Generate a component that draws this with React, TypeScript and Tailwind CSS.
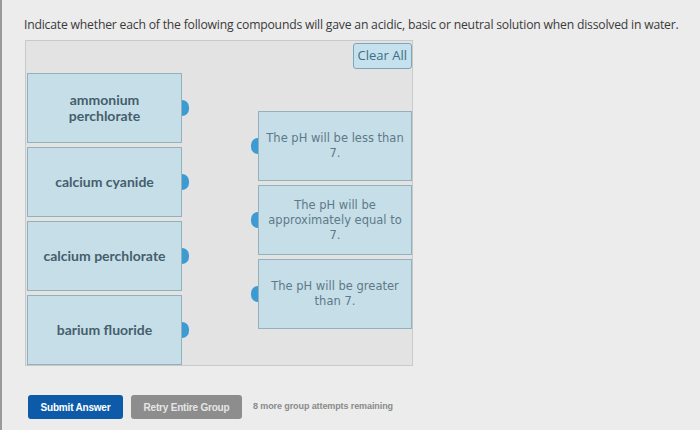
import React from "react";

const compounds = [
  ["ammonium", "perchlorate"],
  ["calcium cyanide"],
  ["calcium perchlorate"],
  ["barium fluoride"],
];

const answers = [
  "The pH will be less than 7.",
  "The pH will be approximately equal to 7.",
  "The pH will be greater than 7.",
];

export default function App() {
  return (
    <div className="w-[700px] h-[430px] overflow-hidden bg-[#ececec] border-l-2 border-[#9a9a9a] font-['Open_Sans',sans-serif]">
      <p className="pt-[15px] pl-[22px] text-[12.2px] tracking-[-0.2px] text-[#3a3a3a] leading-5">
        Indicate whether each of the following compounds will gave an acidic, basic or neutral solution when dissolved in water.
      </p>

      <div className="ml-[23px] mt-[5px] w-[388px] h-[326px] border border-[#c9c9c9] bg-[#e3e3e3] flex flex-col">
        <div className="flex justify-end pt-[2px] h-[32px]">
          <button className="h-[26px] px-[4px] rounded-[3px] border border-[#7ba6b9] bg-[#c4e1ed] text-[13px] text-[#3f6d83] font-['Open_Sans',sans-serif]">
            Clear All
          </button>
        </div>

        <div className="flex justify-between">
          <div className="flex flex-col gap-[4px] pl-[1px]">
            {compounds.map((lines, i) => (
              <div
                key={i}
                className="relative w-[155px] h-[70px] bg-[#c6dee8] border border-[#93b1bd] flex flex-col items-center justify-center font-['Lato',sans-serif] font-bold text-[14px] leading-[16px] text-[#455e6d]"
              >
                {lines.map((l) => (
                  <span key={l}>{l}</span>
                ))}
                <span className="absolute right-[-8px] top-1/2 -translate-y-1/2 w-[7px] h-[16px] rounded-r-full bg-[#3c9bd3]" />
              </div>
            ))}
          </div>

          <div className="flex flex-col gap-[4px] mt-[38px]">
            {answers.map((a, i) => (
              <div
                key={i}
                className="relative w-[154px] h-[70px] bg-[#c6dee8] border border-[#93b1bd] flex items-center justify-center px-[6px] text-center font-['DejaVu_Sans',sans-serif] text-[11.5px] leading-[15px] text-[#5d7a89]"
              >
                {a}
                <span className="absolute left-[-8px] top-1/2 -translate-y-1/2 w-[7px] h-[16px] rounded-l-full bg-[#3c9bd3]" />
              </div>
            ))}
          </div>
        </div>
      </div>

      <div className="flex items-center mt-[29px] ml-[26px] font-['Liberation_Sans',sans-serif] font-bold">
        <button className="w-[95px] h-[24px] rounded-[3px] bg-[#0d5ba8] text-white text-[10px] tracking-[-0.2px]">
          Submit Answer
        </button>
        <button className="ml-[8px] w-[111px] h-[24px] rounded-[3px] bg-[#8d8d8d] text-[#e6e6e6] text-[10px] tracking-[-0.2px]">
          Retry Entire Group
        </button>
        <span className="ml-[11px] text-[9px] text-[#8a8a8a] tracking-[-0.1px]">
          8 more group attempts remaining
        </span>
      </div>
    </div>
  );
}
